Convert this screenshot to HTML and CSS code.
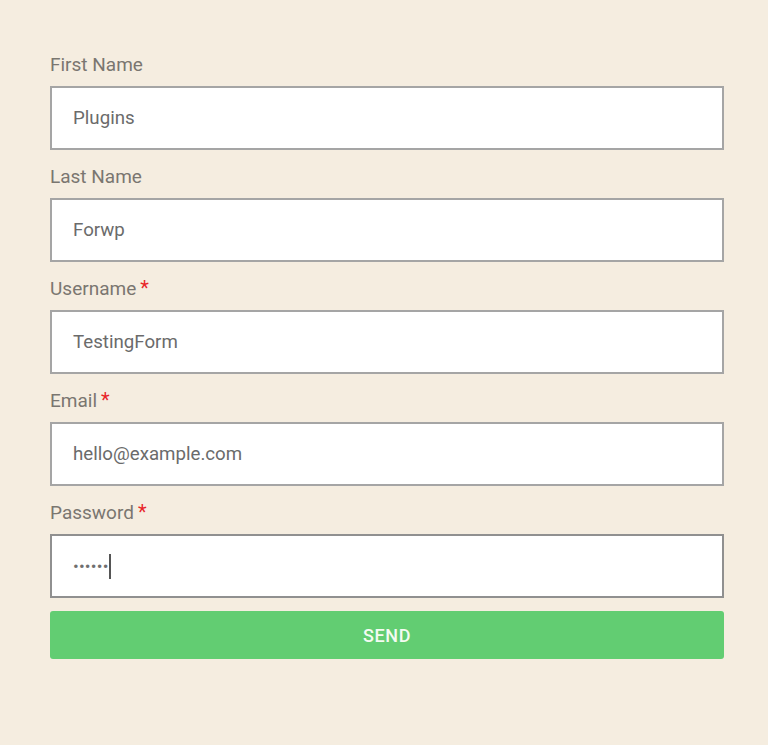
FILE: index.html
```html
<!DOCTYPE html>
<html>
<head>
<meta charset="utf-8">
<link rel="stylesheet" href="styles.css">
</head>
<body>
<form class="form">
  <div class="field">
    <label class="label">First Name</label>
    <div class="box"><span class="value">Plugins</span></div>
  </div>
  <div class="field">
    <label class="label">Last Name</label>
    <div class="box"><span class="value">Forwp</span></div>
  </div>
  <div class="field">
    <label class="label">Username<span class="req">*</span></label>
    <div class="box"><span class="value">TestingForm</span></div>
  </div>
  <div class="field">
    <label class="label">Email<span class="req">*</span></label>
    <div class="box"><span class="value">hello@example.com</span></div>
  </div>
  <div class="field">
    <label class="label">Password<span class="req">*</span></label>
    <div class="box box-focus"><span class="value dots">••••••</span><span class="caret"></span></div>
  </div>
  <div class="send">SEND</div>
</form>
</body>
</html>
```
FILE: styles.css
```css
html, body {
  margin: 0;
  padding: 0;
  background: #f5ede0;
  font-family: Roboto, "Liberation Sans", sans-serif;
}
.form {
  display: flex;
  flex-direction: column;
  gap: 15px;
  padding: 53px 44px 0 50px;
  width: 674px;
}
.field {
  display: flex;
  flex-direction: column;
  gap: 9px;
}
.label {
  font-size: 19px;
  line-height: 24px;
  height: 24px;
  color: #7a7670;
}
.req {
  color: #e8262a;
  margin-left: 4px;
  font-size: 20px;
  line-height: 1;
}
.box {
  height: 64px;
  box-sizing: border-box;
  background: #fff;
  border: 2px solid #a5a5a5;
  display: flex;
  align-items: center;
  padding-left: 21px;
}
.box-focus {
  border-color: #909090;
}
.value {
  font-size: 18.7px;
  color: #6b6b6b;
}
.dots {
  font-size: 17px;
  letter-spacing: 0.2px;
  color: #6f6f6f;
}
.caret {
  display: inline-block;
  width: 2px;
  height: 25px;
  background: #555;
  margin-left: 0;
}
.send {
  margin-top: -2px;
  height: 48px;
  border-radius: 3px;
  background: #62cd72;
  color: #f4fbf2;
  font-size: 18px;
  font-weight: 500;
  letter-spacing: 0.6px;
  display: flex;
  align-items: center;
  justify-content: center;
}
```
